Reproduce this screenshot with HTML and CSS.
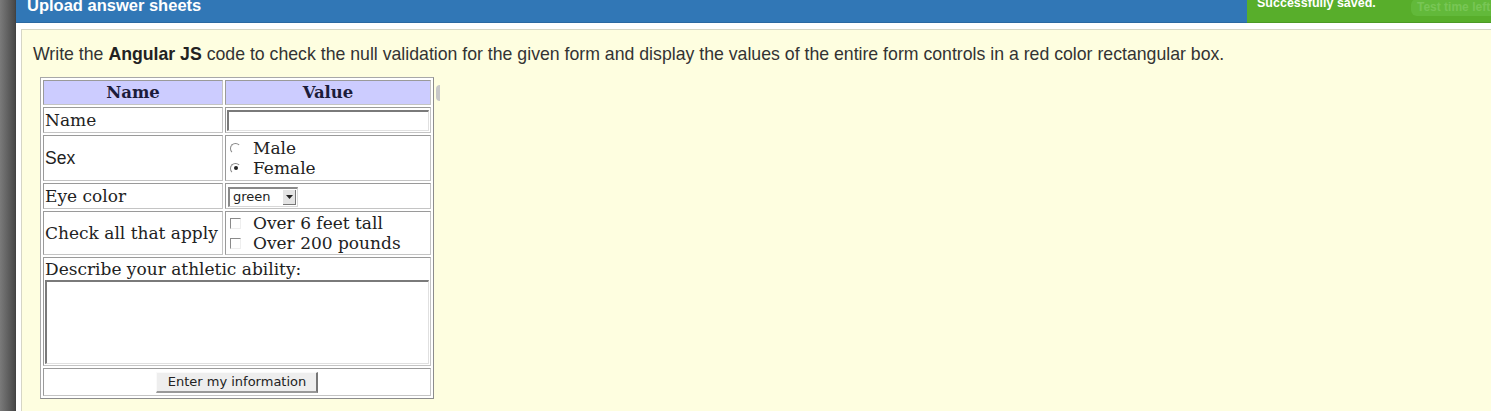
FILE: index.html
```html
<!DOCTYPE html>
<html>
<head>
<meta charset="utf-8">
<link rel="stylesheet" href="styles.css">
</head>
<body>
<div class="page">
  <div class="strip"></div>
  <div class="main">
    <div class="topbar">
      <div class="title-bar"><span class="title">Upload answer sheets</span></div>
      <div class="status-bar">
        <span class="saved">Successfully saved.</span>
        <span class="pill">Test time left</span>
      </div>
    </div>
    <div class="gap"></div>
    <div class="panel">
      <p class="question">Write the <b>Angular JS</b> code to check the null validation for the given form and display the values of the entire form controls in a red color rectangular box.</p>
      <div class="form-row">
        <table class="info">
          <tr class="r-head">
            <th class="c1">Name</th>
            <th class="c2">Value</th>
          </tr>
          <tr class="r-name">
            <td>Name</td>
            <td><span class="textbox"></span></td>
          </tr>
          <tr class="r-sex">
            <td class="sans">Sex</td>
            <td>
              <div class="opt"><span class="radio"></span>Male</div>
              <div class="opt"><span class="radio on"></span>Female</div>
            </td>
          </tr>
          <tr class="r-eye">
            <td>Eye color</td>
            <td><span class="select"><span class="sel-text">green</span><span class="sel-btn"><svg width="7" height="4" viewBox="0 0 7 4"><path d="M0 0h7L3.5 4z" fill="#222"/></svg></span></span></td>
          </tr>
          <tr class="r-check">
            <td>Check all that apply</td>
            <td>
              <div class="opt"><span class="check"></span>Over 6 feet tall</div>
              <div class="opt"><span class="check"></span>Over 200 pounds</div>
            </td>
          </tr>
          <tr class="r-desc">
            <td colspan="2">
              <div class="desc-label">Describe your athletic ability:</div>
              <span class="textarea"></span>
            </td>
          </tr>
          <tr class="r-btn">
            <td colspan="2"><span class="button">Enter my information</span></td>
          </tr>
        </table>
        <span class="knob"></span>
      </div>
    </div>
  </div>
</div>
</body>
</html>
```

FILE: styles.css
```css
html, body {
  margin: 0;
  padding: 0;
  background: #ffffff;
  height: 100%;
  overflow: hidden;
}
.page {
  display: flex;
  height: 411px;
}
.strip {
  width: 16px;
  flex: none;
  background: linear-gradient(to right, #7a7a7a 0%, #606060 50%, #4a4a4a 90%, #3f3f3f 100%);
}
.main {
  flex: 1;
  display: flex;
  flex-direction: column;
  min-width: 0;
}
.topbar {
  display: flex;
  height: 23px;
  flex: none;
}
.title-bar {
  width: 1231px;
  flex: none;
  background: #3177b6;
  border-bottom: 1px solid #2b69a2;
  box-sizing: border-box;
  overflow: hidden;
  padding-left: 11px;
}
.title {
  display: block;
  margin-top: -5px;
  font: bold 16.5px/20px "Liberation Sans", Arial, sans-serif;
  color: #ffffff;
}
.status-bar {
  flex: 1;
  background: #58ae2b;
  border-bottom: 1px solid #4c9a25;
  box-sizing: border-box;
  overflow: hidden;
  display: flex;
  align-items: flex-start;
  padding-left: 10px;
}
.saved {
  margin-top: -5px;
  font: bold 12.5px/16px "Liberation Sans", Arial, sans-serif;
  color: #ffffff;
  width: 154px;
  flex: none;
}
.pill {
  background: #62b93a;
  color: #78c655;
  border-radius: 6px;
  font: bold 12px/16px "Liberation Sans", Arial, sans-serif;
  padding: 0 6px;
  white-space: nowrap;
  height: 17px;
  margin-top: -1px;
}
.gap {
  height: 6px;
  flex: none;
}
.panel {
  flex: 1;
  margin-left: 5px;
  background: #fefee0;
  border-top: 1px solid #d6d6c6;
  border-left: 1px solid #d6d6c6;
  padding: 14px 0 0 11px;
}
.question {
  margin: 0;
  font: 17.7px/20px "Liberation Sans", Arial, sans-serif;
  color: #333333;
  white-space: nowrap;
}
.question b {
  color: #222;
}
.form-row {
  display: flex;
  align-items: flex-start;
  margin-top: 13px;
  margin-left: 7px;
}
.info {
  border: 1px solid #a8a8a8;
  border-right-color: #8c8c8c;
  border-bottom-color: #8c8c8c;
  border-spacing: 2px;
  background: #ffffff;
  font: 17px/20px "DejaVu Serif", serif;
  color: #222;
}
.info th, .info td {
  border: 1px solid #c4c4c4;
  border-top-color: #9a9a9a;
  border-left-color: #9a9a9a;
  padding: 0 1px;
  text-align: left;
  vertical-align: middle;
}
.info th {
  background: #ccccff;
  text-align: center;
  font-weight: bold;
  font-size: 16.5px;
  color: #1c1c3a;
}
.c1 { width: 176px; }
.c2 { width: 202px; }
.sans {
  font-family: "Liberation Sans", Arial, sans-serif;
  font-size: 17.5px;
}
.r-head th { height: 23px; }
.r-name td { height: 24px; }
.r-sex td { height: 44px; }
.r-eye td { height: 24px; }
.r-check td { height: 42px; }
.textbox {
  display: block;
  height: 18px;
  border-top: 2px solid #7a7a7a;
  border-left: 2px solid #7a7a7a;
  border-right: 1px solid #e0e0e0;
  border-bottom: 1px solid #e0e0e0;
  background: #fff;
  margin: 1px 0;
}
.opt {
  display: flex;
  align-items: center;
  line-height: 20px;
  padding-left: 3px;
}
.radio {
  width: 9px;
  height: 9px;
  border-radius: 50%;
  border: 1px solid transparent;
  border-top-color: #888;
  border-left-color: #888;
  margin-right: 12px;
  position: relative;
  flex: none;
}
.radio.on::after {
  content: "";
  position: absolute;
  left: 2.5px;
  top: 2.5px;
  width: 4px;
  height: 4px;
  border-radius: 50%;
  background: #222;
}
.check {
  width: 9px;
  height: 9px;
  border-top: 1px solid #8a8a8a;
  border-left: 1px solid #8a8a8a;
  border-right: 1px solid #eee;
  border-bottom: 1px solid #eee;
  margin-right: 12px;
  flex: none;
}
.select {
  display: inline-flex;
  align-items: center;
  width: 70px;
  height: 20px;
  box-sizing: border-box;
  border-top: 2px solid #8a8a8a;
  border-left: 2px solid #8a8a8a;
  border-right: 1px solid #d8d8d8;
  border-bottom: 1px solid #d8d8d8;
  background: #fff;
  margin-left: 1px;
  vertical-align: middle;
  padding-left: 3px;
}
.sel-text {
  flex: 1;
  font: 13px/16px "DejaVu Sans", sans-serif;
  color: #222;
}
.sel-btn {
  width: 12px;
  height: 14px;
  background: #e4e4e4;
  border-right: 1px solid #777;
  border-bottom: 1px solid #777;
  display: flex;
  align-items: center;
  justify-content: center;
  margin-right: 1px;
}
.desc-label {
  line-height: 22px;
}
.textarea {
  display: block;
  height: 81px;
  border-top: 2px solid #7a7a7a;
  border-left: 2px solid #7a7a7a;
  border-right: 1px solid #e0e0e0;
  border-bottom: 1px solid #e0e0e0;
  background: #fff;
  margin-bottom: 1px;
}
.r-btn td {
  text-align: center;
  height: 26px;
}
.button {
  display: inline-block;
  font: 13px/18px "DejaVu Sans", sans-serif;
  color: #222;
  background: #eeeeee;
  border-top: 1px solid #fafafa;
  border-left: 1px solid #fafafa;
  border-right: 2px solid #777;
  border-bottom: 2px solid #999;
  padding: 0 10px 0 11px;
  vertical-align: middle;
}
.knob {
  width: 4px;
  height: 16px;
  margin-top: 8px;
  margin-left: 2px;
  border-radius: 4px 0 0 4px;
  background: #c8c8c8;
}
```
